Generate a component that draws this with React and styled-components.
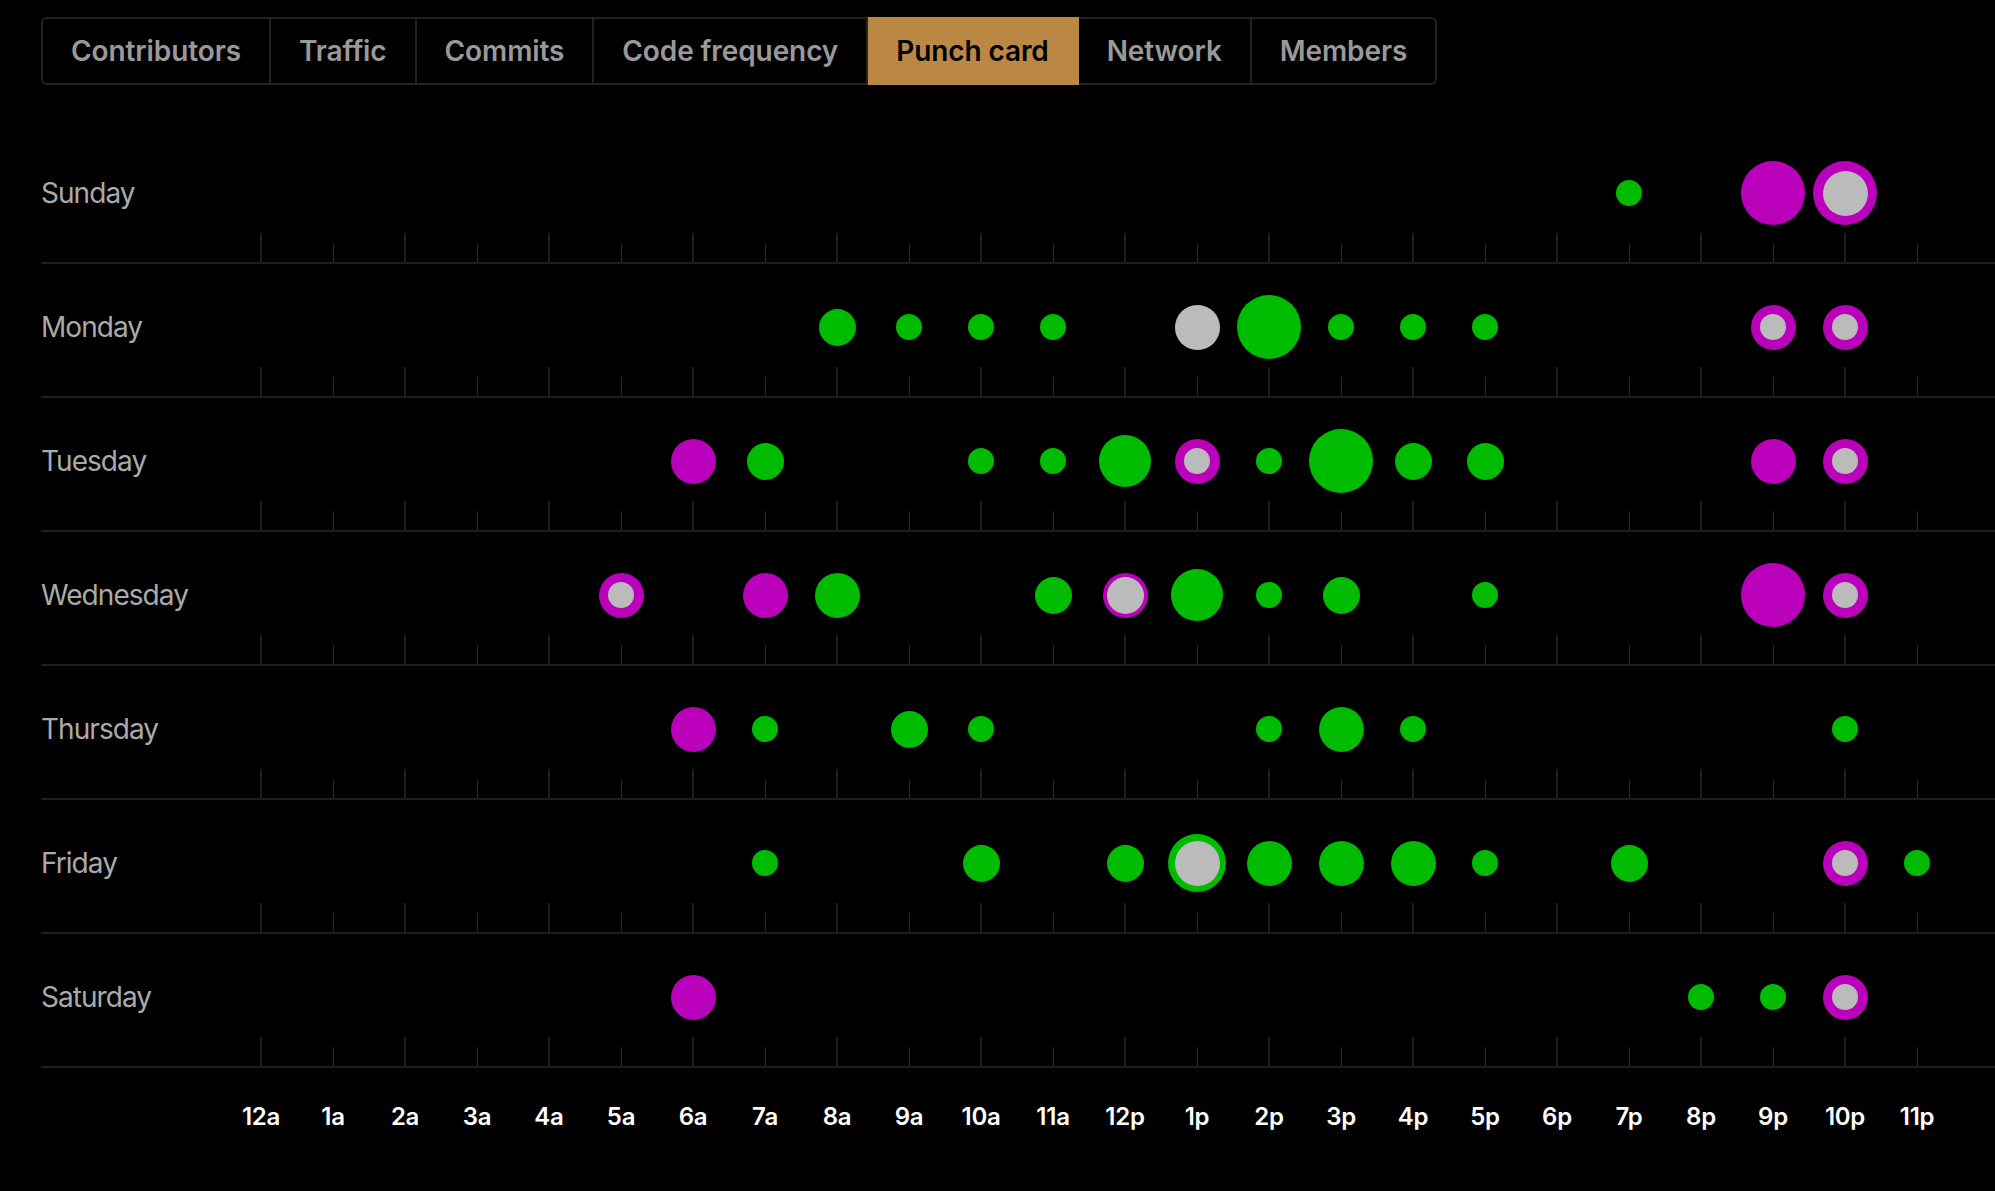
import styled, { createGlobalStyle } from "styled-components";

const GlobalStyle = createGlobalStyle`
  html, body {
    margin: 0;
    background: #000;
  }
`;

const tabs = ["Contributors", "Traffic", "Commits", "Code frequency", "Punch card", "Network", "Members"];

const days = [
  { name: "Sunday", dots: { 19: ["g", 1], 21: ["m", 6], 22: ["m", 6, 3] } },
  { name: "Monday", dots: { 8: ["g", 2], 9: ["g", 1], 10: ["g", 1], 11: ["g", 1], 13: ["m", 3, 3], 14: ["g", 6], 15: ["g", 1], 16: ["g", 1], 17: ["g", 1], 21: ["m", 3, 1], 22: ["m", 3, 1] } },
  { name: "Tuesday", dots: { 6: ["m", 3], 7: ["g", 2], 10: ["g", 1], 11: ["g", 1], 12: ["g", 4], 13: ["m", 3, 1], 14: ["g", 1], 15: ["g", 6], 16: ["g", 2], 17: ["g", 2], 21: ["m", 3], 22: ["m", 3, 1] } },
  { name: "Wednesday", dots: { 5: ["m", 3, 1], 7: ["m", 3], 8: ["g", 3], 11: ["g", 2], 12: ["m", 3, 2], 13: ["g", 4], 14: ["g", 1], 15: ["g", 2], 17: ["g", 1], 21: ["m", 6], 22: ["m", 3, 1] } },
  { name: "Thursday", dots: { 6: ["m", 3], 7: ["g", 1], 9: ["g", 2], 10: ["g", 1], 14: ["g", 1], 15: ["g", 3], 16: ["g", 1], 22: ["g", 1] } },
  { name: "Friday", dots: { 7: ["g", 1], 10: ["g", 2], 12: ["g", 2], 13: ["g", 5, 3], 14: ["g", 3], 15: ["g", 3], 16: ["g", 3], 17: ["g", 1], 19: ["g", 2], 22: ["m", 3, 1], 23: ["g", 1] } },
  { name: "Saturday", dots: { 6: ["m", 3], 20: ["g", 1], 21: ["g", 1], 22: ["m", 3, 1] } },
];

const hours = Array.from({ length: 24 }, (_, i) => `${i % 12 === 0 ? 12 : i % 12}${i < 12 ? "a" : "p"}`);

const dotSize = (count) => Math.round(26 * Math.sqrt(count));

export default function App() {
  return (
    <Page>
      <GlobalStyle />
      <TabBar>
        {tabs.map((tab) => (
          <Tab key={tab} $active={tab === "Punch card"}>{tab}</Tab>
        ))}
      </TabBar>
      <Chart>
        {days.map((day) => (
          <DayRow key={day.name}>
            <DayLabel>{day.name}</DayLabel>
            {hours.map((hour, i) => {
              const dot = day.dots[i];
              return (
                <HourCell key={hour}>
                  <DotArea>
                    {dot && (
                      <Dot $color={dot[0]} $size={dotSize(dot[1])}>
                        {dot[2] && <InnerDot $size={dotSize(dot[2])} />}
                      </Dot>
                    )}
                  </DotArea>
                  <TickArea>
                    <Tick $major={i % 2 === 0} />
                  </TickArea>
                </HourCell>
              );
            })}
          </DayRow>
        ))}
        <AxisRow>
          {hours.map((hour) => (
            <AxisLabel key={hour}>{hour}</AxisLabel>
          ))}
        </AxisRow>
      </Chart>
    </Page>
  );
}

const Page = styled.div`
  height: 1191px;
  box-sizing: border-box;
  padding: 17px 0 0 41px;
  overflow: hidden;
  background: #000;
  font-family: Inter, "Liberation Sans", sans-serif;
`;

const TabBar = styled.div`
  display: inline-flex;
  height: 68px;
  box-sizing: border-box;
  border: 2px solid #222;
  border-radius: 6px;
`;

const Tab = styled.div`
  display: flex;
  align-items: center;
  justify-content: center;
  height: 68px;
  margin-top: -2px;
  box-sizing: border-box;
  padding: 0 28px;
  font-size: 28px;
  font-weight: 600;
  letter-spacing: -0.1px;
  color: ${(p) => (p.$active ? "#000" : "#999")};
  background: ${(p) => (p.$active ? "#b84" : "transparent")};
  border-right: 2px solid ${(p) => (p.$active ? "#b84" : "#222")};

  &:last-child {
    border-right: 0;
  }
`;

const Chart = styled.div`
  margin-top: 45px;
`;

const DayRow = styled.div`
  display: flex;
  height: 134px;
  box-sizing: border-box;
  border-bottom: 2px solid #1e1e1e;
`;

const DayLabel = styled.div`
  flex: 0 0 184px;
  height: 64px;
  margin-top: 31px;
  line-height: 64px;
  font-size: 28px;
  font-weight: 400;
  letter-spacing: -0.95px;
  color: #aaa;
`;

const HourCell = styled.div`
  flex: 0 0 72px;
  display: flex;
  flex-direction: column;
  align-items: center;
`;

const DotArea = styled.div`
  display: flex;
  align-items: center;
  justify-content: center;
  height: 64px;
  margin: 31px 0 8px;
`;

const Dot = styled.div`
  display: flex;
  align-items: center;
  justify-content: center;
  width: ${(p) => p.$size}px;
  height: ${(p) => p.$size}px;
  border-radius: 50%;
  background: ${(p) => (p.$color === "g" ? "#0b0" : "#b0b")};
`;

const InnerDot = styled.div`
  width: ${(p) => p.$size}px;
  height: ${(p) => p.$size}px;
  border-radius: 50%;
  background: #bbb;
`;

const TickArea = styled.div`
  display: flex;
  align-items: flex-end;
  height: 29px;
`;

const Tick = styled.div`
  width: ${(p) => (p.$major ? 2 : 1)}px;
  height: ${(p) => (p.$major ? 29 : 19)}px;
  background: ${(p) => (p.$major ? "#1e1e1e" : "#262626")};
`;

const AxisRow = styled.div`
  display: flex;
  margin: 29px 0 0 184px;
`;

const AxisLabel = styled.div`
  flex: 0 0 72px;
  text-align: center;
  font-size: 24px;
  line-height: 40px;
  font-weight: 600;
  letter-spacing: -0.25px;
  color: #fff;
`;
